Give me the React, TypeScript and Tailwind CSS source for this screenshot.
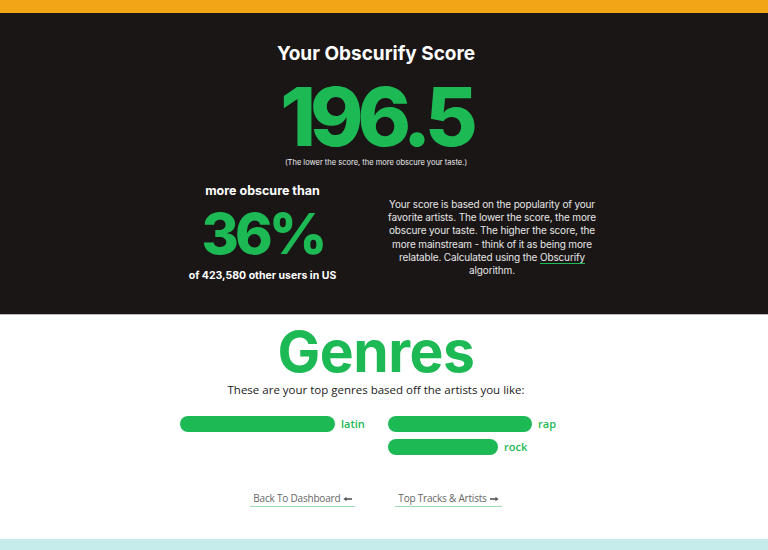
import React from 'react';

const head = { fontFamily: 'Inter, "Noto Sans", sans-serif' };
const body = { fontFamily: '"Open Sans", "Noto Sans", sans-serif' };

const genres = [
  { name: 'latin', width: 155, col: 0 },
  { name: 'rap', width: 144, col: 1 },
  { name: 'rock', width: 110, col: 1 },
];

function GenreBar({ name, width }: { name: string; width: number }) {
  return (
    <div className="flex h-[16px] items-center">
      <div className="h-[16px] rounded-full bg-[#1db954]" style={{ width }} />
      <span className="ml-[6px] text-[11px] font-semibold text-[#1db954]" style={body}>
        {name}
      </span>
    </div>
  );
}

function Arrow({ left }: { left?: boolean }) {
  return (
    <svg width="9" height="6" viewBox="0 0 9 6" className={'ml-[3px] inline-block align-middle' + (left ? ' rotate-180' : '')}>
      <path d="M0 3H7" stroke="#555" strokeWidth="1.6" />
      <path d="M5.5 0.8L8.5 3L5.5 5.2Z" fill="#555" />
    </svg>
  );
}

export default function App() {
  return (
    <div className="flex h-[550px] w-[768px] flex-col overflow-hidden bg-white">
      <div className="h-[13px] bg-[#f2a516]" />

      {/* score panel */}
      <div className="h-[302px] border-b border-[#bbb] bg-[#1a1616] text-white" style={head}>
        <div className="flex w-[752px] flex-col items-center">
          <h1 className="mt-[30px] text-[19px] font-bold leading-[22px]">Your Obscurify Score</h1>
          <div className="mt-[11px] text-[81px] font-extrabold leading-[82px] tracking-[-6px] text-[#1db954]">196.5</div>
          <p className="mt-[0px] text-[7.5px] leading-[10px] text-[#eee]">(The lower the score, the more obscure your taste.)</p>

          <div className="mt-[15px] flex w-full">
            <div className="ml-[180px] flex w-[165px] flex-col items-center">
              <div className="text-[12.5px] font-bold leading-[16px]">more obscure than</div>
              <div className="mt-[4px] text-[57px] font-extrabold leading-[62px] tracking-[-4px] text-[#1db954]">36%</div>
              <div className="mt-[4px] text-[10.5px] font-bold leading-[14px]">of 423,580 other users in US</div>
            </div>
            <div className="ml-[42px] mt-[15px] w-[210px] text-center text-[10px] leading-[13.2px] tracking-[-0.15px] text-[#e6e6e6]">
              Your score is based on the popularity of your favorite artists. The lower the score, the more obscure
              your taste. The higher the score, the more mainstream - think of it as being more relatable. Calculated
              using the <span className="underline decoration-[#1db954] underline-offset-2">Obscurify</span> algorithm.
            </div>
          </div>
        </div>
      </div>

      {/* genres */}
      <div className="flex w-[752px] flex-1 flex-col items-center">
        <h2 className="mt-[6px] text-[57px] font-bold leading-[62px] tracking-[-0.5px] text-[#1db954]" style={head}>
          Genres
        </h2>
        <p className="-mt-[1px] text-[11.5px] font-medium leading-[16px] text-[#222]" style={body}>
          These are your top genres based off the artists you like:
        </p>

        <div className="mt-[18px] flex w-full">
          <div className="ml-[180px] flex w-[208px] flex-col gap-[7px]">
            {genres.filter((g) => g.col === 0).map((g) => (
              <GenreBar key={g.name} name={g.name} width={g.width} />
            ))}
          </div>
          <div className="flex flex-col gap-[7px]">
            {genres.filter((g) => g.col === 1).map((g) => (
              <GenreBar key={g.name} name={g.name} width={g.width} />
            ))}
          </div>
        </div>

        <div className="mt-[36px] flex gap-[40px] text-[10px] leading-[14px] tracking-[-0.2px] text-[#666]" style={body}>
          <a className="border-b border-[#9ed9b3] px-[3px] pb-[1px]">Back To Dashboard<Arrow left /></a>
          <a className="border-b border-[#9ed9b3] px-[3px] pb-[1px]">Top Tracks &amp; Artists<Arrow /></a>
        </div>
      </div>

      <div className="h-[11px] bg-[#c6ebeb]" />
    </div>
  );
}
